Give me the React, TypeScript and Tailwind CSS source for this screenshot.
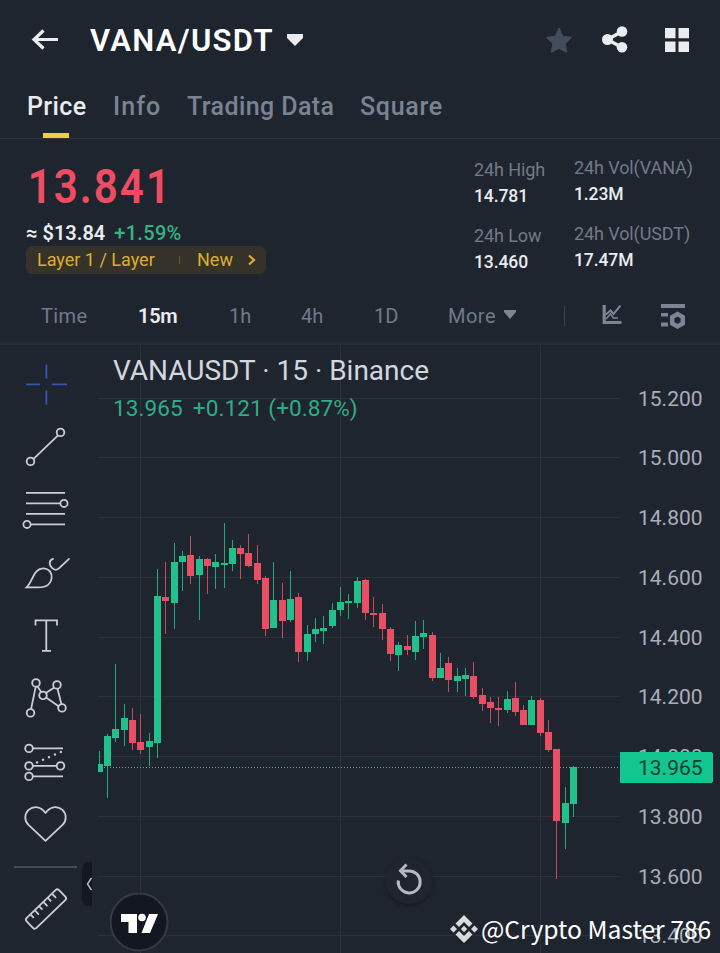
import type { ReactNode } from "react";
import clsx from "clsx";

type Candle = [
  high: number,
  top: number,
  bottom: number,
  low: number,
  up: 0 | 1,
];

const candles: Candle[] = [
  [751, 764, 772, 772, 1],
  [734, 736, 766, 798, 1],
  [664, 729, 738, 742, 1],
  [704, 718, 730, 746, 1],
  [708, 720, 743, 750, 0],
  [714, 742, 750, 754, 0],
  [733, 741, 747, 766, 1],
  [569, 596, 743, 758, 1],
  [562, 597, 601, 634, 0],
  [543, 562, 603, 629, 1],
  [551, 556, 562, 591, 1],
  [536, 555, 576, 584, 0],
  [556, 559, 575, 620, 1],
  [558, 559, 566, 594, 0],
  [554, 562, 567, 589, 1],
  [523, 563, 565, 588, 1],
  [540, 548, 564, 571, 1],
  [545, 548, 554, 579, 0],
  [534, 553, 566, 567, 0],
  [545, 563, 580, 584, 0],
  [576, 578, 629, 636, 0],
  [562, 600, 628, 628, 1],
  [583, 600, 621, 638, 0],
  [571, 599, 620, 622, 1],
  [593, 597, 652, 662, 0],
  [625, 634, 652, 661, 1],
  [618, 629, 634, 642, 1],
  [616, 628, 631, 644, 1],
  [603, 610, 626, 628, 1],
  [587, 602, 610, 616, 1],
  [594, 601, 603, 619, 1],
  [577, 581, 603, 608, 1],
  [579, 580, 613, 620, 0],
  [597, 613, 615, 627, 0],
  [604, 613, 629, 640, 0],
  [627, 629, 654, 661, 0],
  [642, 645, 655, 671, 1],
  [635, 646, 650, 655, 0],
  [621, 636, 652, 660, 1],
  [620, 633, 637, 649, 1],
  [632, 635, 678, 681, 0],
  [653, 668, 678, 678, 1],
  [657, 663, 680, 692, 0],
  [668, 676, 681, 692, 1],
  [668, 675, 679, 696, 1],
  [662, 676, 697, 699, 0],
  [688, 695, 704, 711, 0],
  [697, 702, 708, 723, 0],
  [697, 708, 710, 726, 0],
  [691, 699, 710, 713, 1],
  [682, 698, 712, 716, 0],
  [705, 710, 725, 725, 0],
  [696, 700, 725, 725, 1],
  [698, 700, 733, 736, 0],
  [720, 732, 750, 752, 0],
  [749, 749, 821, 879, 0],
  [787, 803, 823, 849, 1],
  [766, 767, 804, 817, 1],
];

const levels = [
  { price: "15.200", y: 398 },
  { price: "15.000", y: 457 },
  { price: "14.800", y: 517 },
  { price: "14.600", y: 577 },
  { price: "14.400", y: 637 },
  { price: "14.200", y: 696 },
  { price: "14.000", y: 756 },
  { price: "13.800", y: 816 },
  { price: "13.600", y: 876 },
  { price: "13.400", y: 935 },
];

const UP = "#22c08b";
const DOWN = "#e94f64";

const candleX = (i: number) => Math.floor(99.14 + i * 8.324);

const Header = () => (
  <header className="flex h-20 items-center">
    <svg className="ml-7 size-8" viewBox="28 24 32 32" fill="none">
      <path
        d="M58 39.5H34M43.5 30.5L34 39.5L43.5 48.5"
        stroke="#eaecef"
        strokeWidth="3.2"
      />
    </svg>
    <h1 className="ml-[30px] w-[197px] whitespace-nowrap pt-[3px] text-[31px] font-semibold tracking-[1.3px] text-white">
      VANA/USDT
    </h1>
    <svg className="h-3 w-4" viewBox="0 0 16 12">
      <path d="M0 0H16V4L8 12L0 4Z" fill="#eaecef" />
    </svg>
    <svg className="ml-[242px] h-[28px] w-[28px]" viewBox="545 26 28 28">
      <path
        d="M559 28L562.9 36.2L571.5 37.4L565.2 43.6L566.8 52.4L559 48.4L551.2 52.4L552.8 43.6L546.5 37.4L555.1 36.2Z"
        fill="#434c5a"
        stroke="#434c5a"
        strokeLinejoin="round"
      />
    </svg>
    <svg className="ml-7 size-7" viewBox="601 26 28 28" fill="#eaecef">
      <path
        d="M622 31.5L607.5 39.5L622 47.5"
        stroke="#eaecef"
        strokeWidth="3.4"
        fill="none"
      />
      <circle cx="622" cy="31.5" r="5.3" />
      <circle cx="607.5" cy="39.5" r="5.5" />
      <circle cx="622" cy="47.3" r="5.3" />
    </svg>
    <svg className="ml-[35.5px] h-6 w-6" viewBox="0 0 24 24" fill="#eaecef">
      <path d="M0 0h10.5v10.2H0zM13.5 0H24v10.2H13.5zM0 13.5h10.5V24H0zM13.5 13.5H24V24H13.5z" />
    </svg>
  </header>
);

const Tabs = () => (
  <nav className="flex h-[59px] border-b border-[#2d343e] pl-[27px] text-[25px] font-medium text-[#7a8392]">
    <div className="relative w-[86px] pt-2 tracking-[0.4px] text-[#eaecef]">
      Price
      <span className="absolute bottom-0 left-4 h-[5px] w-[26px] bg-[#f0cd42]" />
    </div>
    <div className="w-[74px] pt-2 tracking-[1.1px]">Info</div>
    <div className="w-[173px] whitespace-nowrap pt-2 tracking-[0.4px]">
      Trading Data
    </div>
    <div className="pt-2 tracking-[0.7px]">Square</div>
  </nav>
);

const Stat = ({ label, value }: { label: string; value: string }) => (
  <div className="h-[66px] whitespace-nowrap">
    <div className="h-[26px] text-[18px] leading-[26px] tracking-[-0.1px] text-[#717a88]">
      {label}
    </div>
    <div className="text-[17.5px] font-medium leading-[26px] tracking-[-0.1px] text-[#eaecef]">
      {value}
    </div>
  </div>
);

const Summary = () => (
  <section className="flex h-[151px] whitespace-nowrap">
    <div className="w-[448px] pl-[26px] pt-[18px]">
      <div className="h-[60px] origin-left scale-x-[0.86] pl-0.5 text-[49px] font-semibold leading-[60px] tracking-[2.3px] text-[#ee4c63]">
        13.841
      </div>
      <div className="flex h-[29px] items-center gap-2 pt-0.5 text-[20px]">
        <span className="font-semibold text-[#eaecef]">≈ $13.84</span>
        <span className="pl-px font-medium tracking-[0.3px] text-[#35b482]">
          +1.59%
        </span>
      </div>
      <div className="flex h-7 w-60 items-center rounded-md bg-[#353329] pb-px pl-[11px] text-[18px] text-[#dfad2c]">
        <span className="w-[142px]">Layer 1 / Layer</span>
        <span className="h-2 w-px bg-[#6d5b2b]" />
        <span className="ml-[17px] w-[51px]">New</span>
        <svg className="h-3 w-2" viewBox="0 0 8 12" fill="none">
          <path d="M1 1.5L6 6L1 10.5" stroke="#dfad2c" strokeWidth="2.2" />
        </svg>
      </div>
    </div>
    <div className="w-[100px] pl-[26px] pt-[18px]">
      <Stat label="24h High" value="14.781" />
      <Stat label="24h Low" value="13.460" />
    </div>
    <div className="pl-[26px] pt-4">
      <Stat label="24h Vol(VANA)" value="1.23M" />
      <Stat label="24h Vol(USDT)" value="17.47M" />
    </div>
  </section>
);

const Intervals = () => (
  <div className="flex h-[55px] items-center whitespace-nowrap border-b-[3px] border-[#272d37] pl-[41px] text-[20px] text-[#717a88]">
    <span className="w-[97px] tracking-[0.4px]">Time</span>
    <span className="w-[91px] font-semibold tracking-[-0.3px] text-[#eaecef]">
      15m
    </span>
    <span className="w-[72px]">1h</span>
    <span className="w-[73px]">4h</span>
    <span className="w-[74px]">1D</span>
    <span className="w-[56px] tracking-[0.5px]">More</span>
    <svg className="mb-[3px] h-2.5 w-3" viewBox="0 0 12 10">
      <path d="M0 0H12V2L6 9L0 2Z" fill="#7d8594" />
    </svg>
    <span className="ml-12 h-5 w-px bg-[#3a424e]" />
    <svg
      className="mb-[3px] ml-[37px] size-5"
      viewBox="602 305 20 20"
      fill="none"
      stroke="#7d8594"
    >
      <path d="M604.2 305V322.5H621.5" strokeWidth="3.2" />
      <path d="M606 314.5L610.5 310.5L613.5 314L620.5 305.5" strokeWidth="2" />
      <path d="M606 319L610.5 314L613.5 318L618 318" strokeWidth="1.6" />
    </svg>
    <svg className="mb-px ml-[38px] h-[26px] w-[26px]" viewBox="660 302 26 26">
      <path d="M661 303h24v4h-24zM661 312h7v3.5h-7zM661 321.5h7v4h-7z" fill="#7d8594" />
      <path
        d="M677.5 313L682.8 316V322.5L677.5 325.5L672.2 322.5V316Z"
        fill="none"
        stroke="#7d8594"
        strokeWidth="4.4"
      />
    </svg>
  </div>
);

const Tool = ({ children, active }: { children: ReactNode; active?: boolean }) => (
  <svg
    className={clsx(
      "h-[62.75px] w-[60px] shrink-0",
      active ? "stroke-[#3656b8]" : "stroke-[#c9cdd6]",
    )}
    viewBox="-30 -31.4 60 62.75"
    fill="none"
    strokeWidth="1.8"
  >
    {children}
  </svg>
);

const Toolbar = () => (
  <aside className="flex w-[98px] shrink-0 flex-col pl-4 pt-2">
    <Tool active>
      <path d="M0.4 -20V-6M0.4 6V20M-20 0H-6M6 0H21" />
    </Tool>
    <Tool>
      <path d="M-13 12L12 -12" />
      <circle cx="-15.5" cy="14" r="3.8" />
      <circle cx="14.5" cy="-15" r="3.8" />
    </Tool>
    <Tool>
      <path d="M-20 -17.5H19M-20 -7H14M-20 3.5H19M-15 14H19" />
      <circle cx="18" cy="-7" r="3.6" />
      <circle cx="-19" cy="14" r="3.6" />
    </Tool>
    <Tool>
      <path
        d="M-19.5 15C-15 11 -14 4 -9.5 -1C-5 -5.5 1 -4.5 4 -1C7 3 6 9 2 12.5C-1 15 -5 15 -8 15ZM7 -13.5C2.5 -12 3 -7 6 -4.5C8.5 -2 11 -2 13.5 -4.5L23 -13.5"
        strokeLinecap="round"
      />
    </Tool>
    <Tool>
      <path d="M-10.5 -10V-15H11V-10M0.3 -15V15.5M-4 15.5H5" />
    </Tool>
    <Tool>
      <path d="M-10.3 -11.5L-15 11M-8.5 -12L-4.8 -6.5M-0.2 -5.5L8.3 -11M0 -0.8L13 8M11.5 -9.7L15.5 6" />
      <circle cx="-10" cy="-15.5" r="3.8" />
      <circle cx="11" cy="-13.5" r="3.8" />
      <circle cx="-3" cy="-3" r="3.8" />
      <circle cx="16" cy="9.5" r="3.8" />
      <circle cx="-15.5" cy="14.5" r="3.8" />
    </Tool>
    <Tool>
      <path d="M-13 -13H17M-13 4.5H10.5M-13 15H17" />
      <path
        d="M-9 1L15 -9.5"
        strokeDasharray="0.1 6.4"
        strokeWidth="2.4"
        strokeLinecap="round"
      />
      <circle cx="-17" cy="-13" r="3.8" />
      <circle cx="-17" cy="4.5" r="3.8" />
      <circle cx="14.5" cy="4.5" r="3.8" />
      <circle cx="-17" cy="15" r="3.8" />
    </Tool>
    <Tool>
      <path
        d="M-0.5 17.5L-17.5 1.5C-22 -3 -21.5 -9.5 -17.5 -13.5C-12 -18 -5 -17 -0.5 -10.5C4 -17 11 -18 16.5 -13.5C20.5 -9.5 21 -3 16.5 1.5Z"
        strokeLinejoin="round"
      />
    </Tool>
    <div className="-ml-0.5 mt-[11px] h-0.5 w-[63px] shrink-0 bg-[#454c58]" />
    <svg
      className="mt-[9px] h-[64px] w-[60px] shrink-0 stroke-[#c9cdd6]"
      viewBox="-30 -32 60 64"
      fill="none"
      strokeWidth="1.8"
    >
      <g transform="rotate(-44)">
        <rect x="-22.5" y="-7" width="45" height="14" rx="2.5" />
        <path d="M-15 -7V-2M-9 -7V-1M-3 -7V-2M3 -7V-1M9 -7V-2M15 -7V-1" />
      </g>
    </svg>
  </aside>
);

const Chart = () => (
  <svg
    className="block h-[608px] w-[622px] font-[Roboto,sans-serif]"
    viewBox="98 345 622 608"
    shapeRendering="crispEdges"
  >
    {levels.map(({ price, y }) => (
      <rect key={price} x="98" y={y} width="522" height="1" fill="#2a313b" />
    ))}
    {[140, 340, 540].map((x) => (
      <rect key={x} x={x} y="345" width="1" height="608" fill="#2a313b" />
    ))}
    <path
      d="M98 767.5H620"
      stroke="#4fae90"
      strokeWidth="1"
      strokeDasharray="1 2"
    />
    {candles.map(([high, top, bottom, low, up], i) => {
      const x = candleX(i);
      const left = Math.max(x - 3, 98);
      return (
        <g key={i} fill={up ? UP : DOWN}>
          <rect x={x} y={high} width="1" height={low - high} opacity="0.85" />
          <rect x={left} y={top} width={x + 4 - left} height={bottom - top} />
        </g>
      );
    })}
    {levels.map(({ price, y }) => (
      <text key={price} x="638" y={y + 8} fontSize="21" fill="#a9aeb9">
        {price}
      </text>
    ))}
    <path
      d="M620 752H710Q713 752 713 755V780Q713 783 710 783H620Z"
      fill="#13c68f"
    />
    <text x="638" y="775" fontSize="21" fill="#10402f">
      13.965
    </text>
  </svg>
);

const TradingViewBadge = () => (
  <svg className="absolute left-3 top-[548px] size-[60px]" viewBox="0 0 60 60">
    <circle cx="29" cy="29" r="28.5" fill="#131722" stroke="#343a45" strokeWidth="2" />
    <g fill="#fff">
      <path d="M11 21H27V40H18.5V29H11Z" />
      <circle cx="32" cy="24.5" r="3.8" />
      <path d="M39 21H48L40 40H31.5Z" />
    </g>
  </svg>
);

const ResetButton = () => (
  <button className="absolute left-[288px] top-[513px] flex size-[46px] items-center justify-center rounded-full bg-[#1f252f] pb-0.5 shadow-[0_2px_5px_rgba(0,0,0,0.3)]">
    <svg
      className="size-[34px]"
      viewBox="392 863 34 34"
      fill="none"
      stroke="#b5b9c4"
      strokeWidth="3"
    >
      <path d="M401 871H408.5A11 11 0 1 1 398.3 880.5" />
      <path d="M406.5 864.5L400.5 870.8L406.5 877" />
    </svg>
  </button>
);

const Watermark = () => (
  <div className="absolute left-[352px] top-[566px] flex h-9 items-center gap-[3px] whitespace-nowrap font-['Noto_Sans_CJK_SC',sans-serif] text-[24.7px] text-white">
    <svg className="h-7 w-7" viewBox="0 0 28 28" fill="#d9dadb">
      <path d="M14 0L22.5 8.5L19 12L14 7L9 12L5.5 8.5ZM14 28L22.5 19.5L19 16L14 21L9 16L5.5 19.5ZM14 10.8L17.2 14L14 17.2L10.8 14ZM3.5 10.5L7 14L3.5 17.5L0 14ZM24.5 10.5L28 14L24.5 17.5L21 14Z" />
    </svg>
    <span>@Crypto Master 786</span>
  </div>
);

export default function App() {
  return (
    <div className="h-[953px] w-[720px] overflow-hidden bg-[#1f252f] font-[Roboto,sans-serif]">
      <Header />
      <Tabs />
      <Summary />
      <Intervals />
      <main className="flex h-[608px]">
        <Toolbar />
        <div className="relative">
          <Chart />
          <div className="absolute left-[15px] top-2 whitespace-nowrap">
            <div className="text-[28px] leading-[36px] text-[#d3d6df]">
              VANAUSDT · 15 · Binance
            </div>
            <div className="flex gap-2.5 text-[22.5px] leading-[38px] tracking-[0.1px] text-[#2fac86]">
              <span>13.965</span>
              <span>+0.121 (+0.87%)</span>
            </div>
          </div>
          <button className="absolute left-[-16px] top-[517px] flex h-11 w-2.5 items-center justify-end rounded-l-md bg-[#131722]">
            <svg className="h-3.5 w-1.5" viewBox="0 0 6 14" fill="none">
              <path d="M5.5 1L1.5 7L5.5 13" stroke="#b5b9c4" strokeWidth="1.5" />
            </svg>
          </button>
          <TradingViewBadge />
          <ResetButton />
          <Watermark />
        </div>
      </main>
    </div>
  );
}
